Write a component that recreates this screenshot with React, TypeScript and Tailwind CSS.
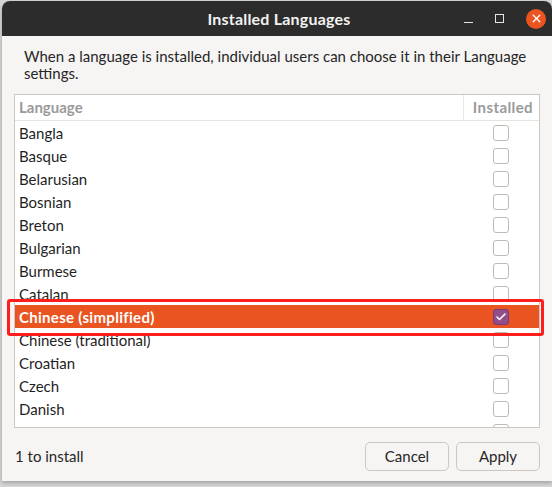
import { Check, X } from "lucide-react";

const languages = [
  "Bangla",
  "Basque",
  "Belarusian",
  "Bosnian",
  "Breton",
  "Bulgarian",
  "Burmese",
  "Catalan",
  "Chinese (simplified)",
  "Chinese (traditional)",
  "Croatian",
  "Czech",
  "Danish",
  "Dutch",
];

const selected = "Chinese (simplified)";

function LanguageRow({ name }: { name: string }) {
  const active = name === selected;
  return (
    <div
      className={
        active
          ? "flex h-[23px] shrink-0 items-center bg-[#e95420] text-white font-bold tracking-[0.3px]"
          : "flex h-[23px] shrink-0 items-center text-[#1f1f1f]"
      }
    >
      <div className="flex-1 truncate pl-[4px] pt-[2px]">{name}</div>
      <div className="flex w-[76px] justify-center">
        {active ? (
          <div className="flex h-[16px] w-[16px] items-center justify-center rounded-[3px] border border-[#7a3c74] bg-[#924d8b]">
            <Check size={12} strokeWidth={3.2} className="text-white" />
          </div>
        ) : (
          <div className="h-[16px] w-[16px] rounded-[3px] border border-[#c0bab4] bg-white" />
        )}
      </div>
    </div>
  );
}

export default function App() {
  return (
    <div
      className="relative h-[487px] w-[552px] overflow-hidden bg-[#d6d6d6] pl-[2px] pt-[1px] text-[15px]"
      style={{ fontFamily: 'Lato, "Liberation Sans", sans-serif' }}
    >
      <div className="flex h-[480px] w-[550px] flex-col overflow-hidden rounded-t-[8px] bg-[#f6f5f4] shadow-[0_2px_4px_rgba(0,0,0,0.25)]">
        {/* Header bar */}
        <header className="grid h-[35px] shrink-0 grid-cols-[1fr_auto_1fr] items-center bg-[#2c2c2c]">
          <div />
          <h1 className="pl-[4px] text-[16px] font-bold tracking-[0.2px] text-[#f2f2f2]">Installed Languages</h1>
          <div className="flex items-center justify-end gap-[22px] pr-[6px]">
            <div className="mt-[8px] h-[1.5px] w-[9px] bg-[#e6e6e6]" />
            <div className="h-[9px] w-[9px] border-[1.5px] border-[#e6e6e6]" />
            <div className="flex h-[20px] w-[20px] items-center justify-center rounded-full bg-[#e95420]">
              <X size={13} strokeWidth={2.5} className="text-white" />
            </div>
          </div>
        </header>

        {/* Body */}
        <div className="flex flex-1 flex-col px-[12px] pt-[12px] pb-[10px]">
          <p className="whitespace-nowrap pl-[10px] leading-[17px] text-[#262626]">
            When a language is installed, individual users can choose it in their Language
            <br />
            settings.
          </p>

          <div className="mt-[12px] flex h-[334px] shrink-0 flex-col overflow-hidden border border-[#cdc7c2] bg-white">
            <div className="flex h-[26px] shrink-0 items-center border-b border-[#e6e3e0] font-bold text-[#9a9a9a]">
              <div className="flex-1 pl-[4px]">Language</div>
              <div className="flex h-full w-[76px] items-center justify-end border-l border-[#ebe8e5] pr-[6px] tracking-[0.4px]">
                Installed
              </div>
            </div>
            {languages.map((l) => (
              <LanguageRow key={l} name={l} />
            ))}
          </div>

          <div className="mt-auto flex items-center">
            <span className="flex-1 pl-[1px] text-[#262626]">1 to install</span>
            <div className="flex gap-[7px]">
              <button className="h-[29px] w-[84px] rounded-[5px] border border-[#cdc7c2] bg-[#f6f5f4] text-[#262626]">
                Cancel
              </button>
              <button className="h-[29px] w-[84px] rounded-[5px] border border-[#cdc7c2] bg-[#f6f5f4] text-[#262626]">
                Apply
              </button>
            </div>
          </div>
        </div>
      </div>

      {/* Red annotation around the selected row */}
      <div className="pointer-events-none absolute left-[7px] top-[299px] h-[37px] w-[537px] rounded-[3px] border-[3px] border-[#ff1e1e]" />
    </div>
  );
}
